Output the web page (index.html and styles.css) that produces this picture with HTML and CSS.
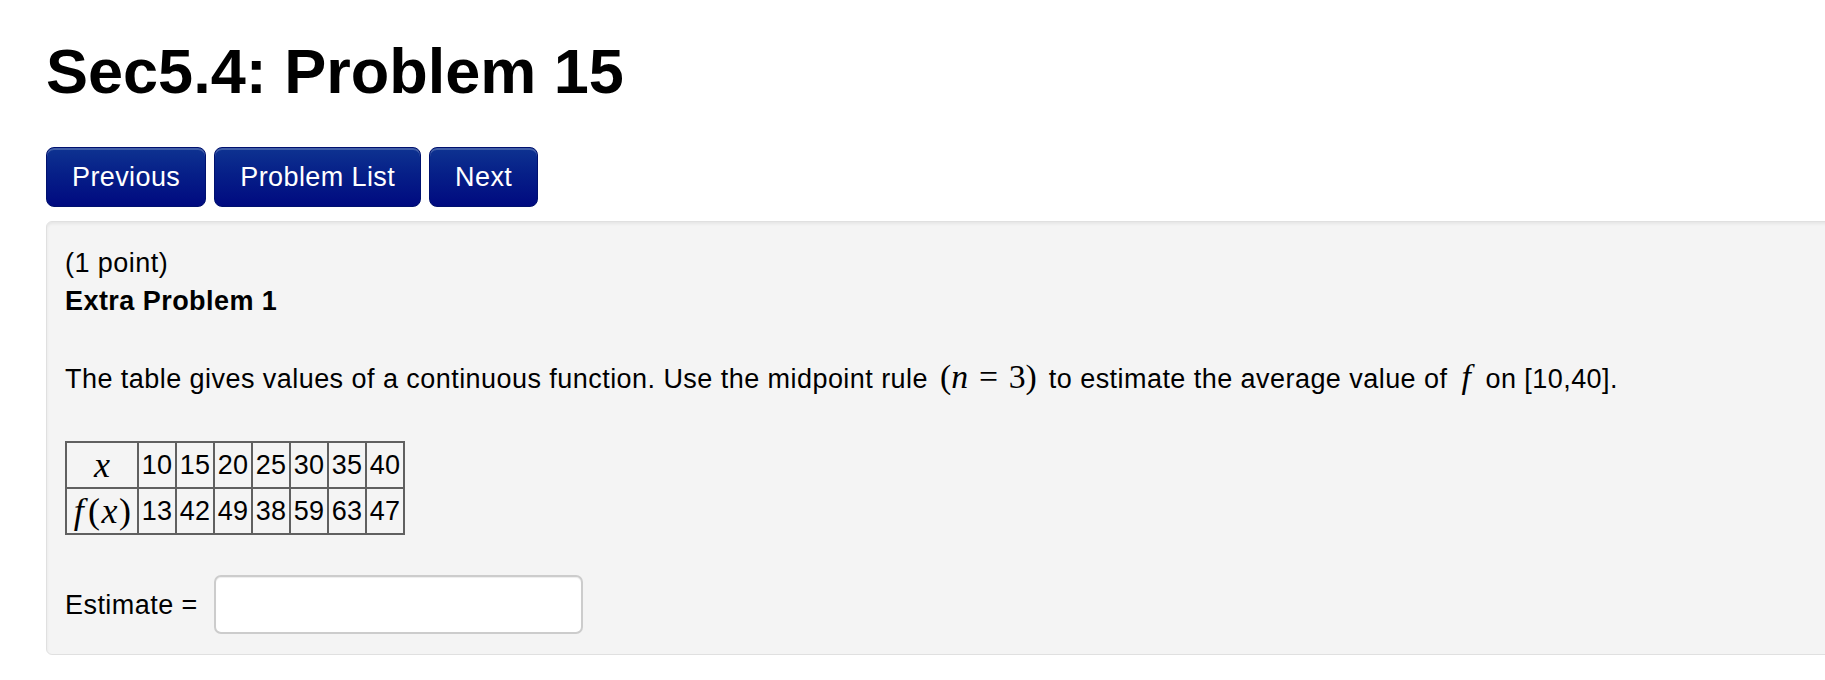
FILE: index.html
```html
<!DOCTYPE html>
<html lang="en">
<head>
<meta charset="utf-8">
<title>Sec5.4: Problem 15</title>
<link rel="stylesheet" href="styles.css">
</head>
<body>
<div class="page">
  <h1 class="title">Sec5.4: Problem 15</h1>
  <div class="nav">
    <a class="btn" href="#">Previous</a>
    <a class="btn" href="#">Problem List</a>
    <a class="btn" href="#">Next</a>
  </div>
  <div class="well">
    <div class="line">(1 point)</div>
    <div class="line bold">Extra Problem 1</div>
    <p class="statement">The table gives values of a continuous function. Use the midpoint rule <span class="math inline"><span class="mo">(</span><span class="mi">n</span><span class="rel">=</span><span class="mn">3</span><span class="mo">)</span></span> to estimate the average value of <span class="math inline"><span class="mi fi">f</span></span> on [10,40].</p>
    <table class="values">
      <tr>
        <td class="head"><span class="math"><span class="mi">x</span></span></td>
        <td>10</td><td>15</td><td>20</td><td>25</td><td>30</td><td>35</td><td>40</td>
      </tr>
      <tr>
        <td class="head"><span class="math"><span class="mi fi">f</span><span class="mo">(</span><span class="mi">x</span><span class="mo">)</span></span></td>
        <td>13</td><td>42</td><td>49</td><td>38</td><td>59</td><td>63</td><td>47</td>
      </tr>
    </table>
    <div class="answer">
      <span class="label">Estimate =</span>
      <input class="field" type="text" aria-label="Estimate">
    </div>
  </div>
</div>
</body>
</html>
```
FILE: styles.css
```css
html, body {
  margin: 0;
  padding: 0;
  background: #ffffff;
  overflow: hidden;
}

body {
  font-family: "Liberation Sans", Arial, sans-serif;
  color: #000000;
  font-size: 27px;
  line-height: 38px;
  letter-spacing: 0.45px;
}

.page {
  padding-left: 46px;
}

.title {
  margin: 36px 0 40px 0;
  font-size: 63px;
  line-height: 71px;
  font-weight: bold;
  letter-spacing: 0;
}

.nav {
  display: flex;
  gap: 8px;
}

.btn {
  display: flex;
  align-items: center;
  height: 60px;
  box-sizing: border-box;
  padding: 0 25px;
  font-size: 27px;
  letter-spacing: 0.4px;
  color: #ffffff;
  text-decoration: none;
  border: 1px solid #00116e;
  border-radius: 8px;
  background: linear-gradient(to bottom, #0e3391 0%, #061f88 45%, #000a80 100%);
  box-shadow: inset 0 2px 0 rgba(255, 255, 255, 0.22);
}

.well {
  margin-top: 14px;
  width: 1820px;
  box-sizing: border-box;
  padding: 22px 18px 20px 18px;
  background: #f4f4f4;
  border: 1px solid #e0e0e0;
  border-radius: 6px;
  box-shadow: inset 0 2px 3px rgba(0, 0, 0, 0.06);
}

.line {
  height: 38px;
}

.bold {
  font-weight: bold;
}

.statement {
  margin: 40px 0 0 0;
}

.math {
  font-family: "Liberation Serif", "Times New Roman", serif;
  font-size: 1.25em;
  line-height: 1;
  letter-spacing: 0;
}

.math.inline {
  margin: 0 4px;
}

.mi {
  font-style: italic;
}

.fi {
  margin: 0 0.08em 0 0.06em;
}

.mo {
  font-style: normal;
}

.rel {
  margin: 0 0.32em;
}

.values {
  margin-top: 43px;
  border-collapse: collapse;
  border: 2px solid #606060;
}

.values td {
  border: 2px solid #606060;
  width: 38px;
  height: 46px;
  box-sizing: border-box;
  padding: 0 2px;
  text-align: center;
  vertical-align: middle;
  line-height: 30px;
  letter-spacing: 0.3px;
}

.values td.head {
  width: 72px;
  padding: 0 1px;
}

.values td.head .math {
  font-size: 36px;
}

.values td.head .mo {
  margin: 0 0.04em;
}

.answer {
  margin-top: 40px;
  display: flex;
  align-items: center;
}

.label {
  margin-right: 16px;
}

.field {
  width: 369px;
  height: 59px;
  box-sizing: border-box;
  margin: 0;
  border: 2px solid #cccccc;
  border-radius: 7px;
  background: #ffffff;
  box-shadow: inset 0 1px 1px rgba(0, 0, 0, 0.075);
}
```
